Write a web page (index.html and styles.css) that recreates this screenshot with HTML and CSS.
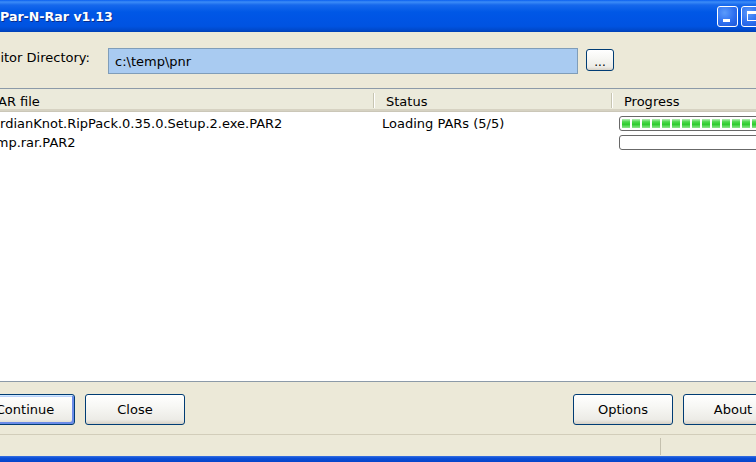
FILE: index.html
```html
<!DOCTYPE html>
<html>
  <head>
    <link rel="stylesheet" href="styles.css">
  </head>
  <body>
    <div class="window">
      <div class="titlebar">
        <svg class="app-icon" width="16" height="16" viewBox="0 0 16 16">
          <rect x="1" y="2" width="14" height="12" rx="2" fill="#f4d35e" stroke="#7a5a00"/>
          <rect x="4" y="5" width="8" height="2" fill="#7a5a00"/>
          <rect x="4" y="9" width="8" height="2" fill="#7a5a00"/>
        </svg>
        <div class="title">Par-N-Rar v1.13</div>
        <div class="caption-buttons">
          <div class="cap-btn"><span class="glyph-min"></span></div>
          <div class="cap-btn"><span class="glyph-max"></span></div>
          <div class="cap-btn cap-close">&#x2715;</div>
        </div>
      </div>

      <div class="content">
        <div class="monitor-row">
          <div class="monitor-label">Monitor Directory:</div>
          <div class="dir-input">c:\temp\pnr</div>
          <div class="xp-button browse-button">...</div>
        </div>

        <div class="list">
          <div class="list-header">
            <div class="head-cell first">PAR file</div>
            <div class="head-cell">Status</div>
            <div class="head-cell">Progress</div>
          </div>
          <div class="list-body">
            <div class="list-row">
              <div class="cell">GordianKnot.RipPack.0.35.0.Setup.2.exe.PAR2</div>
              <div class="cell">Loading PARs (5/5)</div>
              <div class="cell"><div class="progress"><div class="progress-fill" style="width: 100%"></div></div></div>
            </div>
            <div class="list-row">
              <div class="cell">Temp.rar.PAR2</div>
              <div class="cell"></div>
              <div class="cell"><div class="progress"><div class="progress-fill" style="width: 0%"></div></div></div>
            </div>
          </div>
        </div>

        <div class="button-row">
          <div class="button-group">
            <div class="xp-button big-button default-button">Continue</div>
            <div class="xp-button big-button">Close</div>
          </div>
          <div class="button-group">
            <div class="xp-button big-button">Options</div>
            <div class="xp-button big-button">About</div>
          </div>
        </div>
      </div>

      <div class="statusbar">
        <div class="status-pane main-pane"></div>
        <div class="status-pane"></div>
      </div>
      <div class="bottom-border"></div>
    </div>
  </body>
</html>
```

FILE: styles.css
```css
body {
    margin: 0;
    overflow: hidden;
    background-color: #ece9d8;
    font-family: 'DejaVu Sans', 'Liberation Sans', sans-serif;
    font-size: 13px;
    color: #000;
}

/* the window is wider than the shot, its left edge sits off screen */
.window {
    width: 834px;
    height: 462px;
    margin-left: -39px;
    display: flex;
    flex-direction: column;
    background-color: #ece9d8;
}

.titlebar {
    height: 32px;
    flex: none;
    display: flex;
    align-items: center;
    padding: 0 9px 0 8px;
    background: linear-gradient(to bottom, #0a5ff0 0, #3c8cf7 2px, #1668ec 5px, #0058e6 12px, #0055e5 55%, #0053e1 82%, #0049cb 94%, #003fb4 100%);
}

.app-icon {
    margin-right: 15px;
}

.title {
    flex: 1;
    color: #fff;
    font-weight: bold;
    font-size: 12.6px;
    text-shadow: 1px 1px 0 #0a2d8c;
    padding-top: 1px;
}

.caption-buttons {
    display: flex;
    gap: 3px;
}

.cap-btn {
    width: 19px;
    height: 19px;
    border: 1px solid #fff;
    border-radius: 3px;
    background: radial-gradient(circle at 35% 30%, #5b9bfb 0, #2d6ff0 55%, #1c56d6 100%);
    position: relative;
    color: #fff;
    font-size: 11px;
    font-weight: bold;
    display: flex;
    align-items: center;
    justify-content: center;
}

.cap-close {
    background: radial-gradient(circle at 35% 30%, #f08a6a 0, #e0502e 60%, #c8391a 100%);
}

.glyph-min {
    position: absolute;
    left: 5px;
    top: 12px;
    width: 7px;
    height: 3px;
    background-color: #fff;
}

.glyph-max {
    width: 8px;
    height: 6px;
    border: 1px solid #fff;
    border-top-width: 3px;
}

.content {
    flex: 1;
    display: flex;
    flex-direction: column;
    padding: 16px 12px 0 12px;
}

.monitor-row {
    display: flex;
    align-items: flex-start;
    height: 26px;
}

.monitor-label {
    width: 135px;
    padding-top: 2px;
}

.dir-input {
    width: 462px;
    height: 24px;
    line-height: 25px;
    padding-left: 6px;
    border: 1px solid #7f9db9;
    background-color: #a9cbf1;
}

.xp-button {
    border: 1px solid #003c74;
    border-radius: 3px;
    background: linear-gradient(to bottom, #ffffff 0, #f7f7f4 40%, #ecebe6 85%, #d6d0c5 100%);
    display: flex;
    align-items: center;
    justify-content: center;
    box-sizing: border-box;
}

.browse-button {
    width: 28px;
    height: 22px;
    margin: 1px 0 0 8px;
    padding-top: 4px;
    font-size: 12px;
}

.list {
    height: 294px;
    margin-top: 14px;
    border: 1px solid #8c9aa8;
    background-color: #fff;
    box-sizing: border-box;
}

.list-header,
.list-row {
    display: grid;
    grid-template-columns: 400px 238px 1fr;
}

.list-header {
    height: 23px;
    box-sizing: border-box;
    background-color: #ebeadb;
    border-bottom: 1px solid #cbc7b8;
    box-shadow: inset 0 -2px 0 #d6d2c2;
}

.head-cell {
    margin: 4px 0 4px 0;
    padding-top: 2px;
    padding-left: 12px;
    line-height: 13px;
    border-right: 1px solid #c7c5b2;
    box-shadow: 1px 0 0 #fff;
}

.head-cell.first {
    padding-left: 17px;
}

.list-body {
    padding-top: 2px;
}

.list-row {
    height: 19px;
    line-height: 19px;
}

.cell {
    padding-left: 8px;
    white-space: nowrap;
}

.progress {
    margin: 2px 0 0 -1px;
    width: 160px;
    height: 15px;
    box-sizing: border-box;
    border: 1px solid #686868;
    border-radius: 3px;
    padding: 2px;
    background-color: #fff;
}

.progress-fill {
    height: 100%;
    background:
        repeating-linear-gradient(to right, transparent 0, transparent 8px, #fff 8px, #fff 10px),
        linear-gradient(to bottom, #b8eeb8 0, #4fd84f 30%, #2ecd2e 60%, #8ee68e 100%);
}

.button-row {
    display: flex;
    justify-content: space-between;
    margin-top: 12px;
    padding-left: 2px;
}

.button-group {
    display: flex;
    gap: 10px;
}

.big-button {
    width: 100px;
    height: 31px;
}

.default-button {
    box-shadow: inset 1px 1px 0 #cee7ff, inset -2px -2px 0 #6a8be8, inset 2px 2px 0 #b9d1fa;
}

.statusbar {
    height: 22px;
    flex: none;
    display: flex;
    border-top: 1px solid #d2cdba;
    box-sizing: border-box;
    padding: 3px 0 1px 0;
}

.main-pane {
    width: 699px;
    border-right: 1px solid #c4c0ae;
}

.bottom-border {
    height: 6px;
    flex: none;
    background: linear-gradient(to bottom, #3b72e0 0, #0a4ed8 2px, #0645c9 100%);
}
```
